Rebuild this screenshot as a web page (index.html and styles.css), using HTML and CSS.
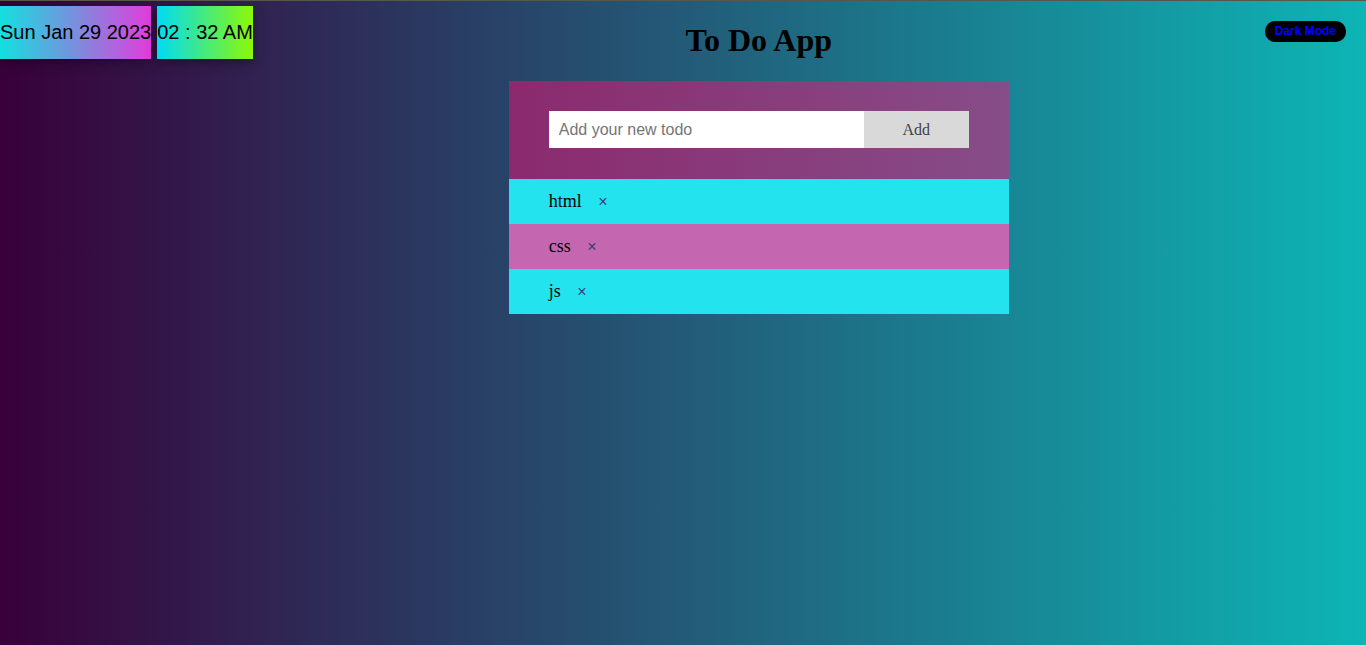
FILE: index.html
```html
<!DOCTYPE html>
<html lang="en">

<head>
    <meta charset="UTF-8">
    <title>To Do App</title>
    <meta name=viewport content="width=device-width,initial-scale=1">
    <link rel="stylesheet" href="styles.css">
</head>

<body>
    <div class=clock>
        <div class=date>Sun Jan 29 2023</div>
        <div class=time>02 : 32 AM</div>
    </div>
    <main class=app>
        <h1>To Do App</h1>
        <div class=card>
            <form class=add-form>
                <input type=text placeholder="Add your new todo">
                <button type=button>Add</button>
            </form>
            <ul class=todos>
                <li class=odd>html <span class=remove>&times;</span></li>
                <li class=even>css <span class=remove>&times;</span></li>
                <li class=odd>js <span class=remove>&times;</span></li>
            </ul>
        </div>
    </main>
    <button class=toggle type=button>Dark Mode</button>
</body>

</html>
```

FILE: styles.css
```css
* {
    margin: 0;
    padding: 0;
    box-sizing: border-box;
}

html,
body {
    height: 100%;
}

body {
    display: flex;
    align-items: flex-start;
    border-top: 1px solid #55584a;
    background: linear-gradient(to right, #38003a, #0db5b5);
    font-family: "Liberation Serif", serif;
}

.clock {
    display: flex;
    gap: 6px;
    margin-top: 5px;
    font-family: "Liberation Sans", sans-serif;
    font-size: 20px;
    line-height: 23px;
}

.date,
.time {
    padding: 15px 0;
    box-shadow: 0 4px 10px rgba(0, 0, 0, 0.35);
    white-space: nowrap;
}

.date {
    background: linear-gradient(to right, #13e0e0, #e23cdc);
}

.time {
    background: linear-gradient(to right, #00dcf5, #8cf806);
}

.app {
    flex: 1;
    display: flex;
    flex-direction: column;
    align-items: center;
}

h1 {
    font-size: 32px;
    margin: 21px 0 22px;
    line-height: 37px;
}

.card {
    width: 500px;
}

.add-form {
    display: flex;
    padding: 30px 40px 31px;
    background: linear-gradient(to right, #8b2a6e, #864d88);
}

.add-form input {
    width: 315px;
    height: 37px;
    border: 0;
    padding: 0 10px;
    font-family: "Liberation Sans", sans-serif;
    font-size: 16px;
    outline: none;
}

.add-form input::placeholder {
    color: #757575;
}

.add-form button {
    width: 105px;
    height: 37px;
    border: 0;
    background-color: #d9d9d9;
    color: #444;
    font-family: "Liberation Serif", serif;
    font-size: 16px;
}

.todos {
    list-style: none;
}

.todos li {
    height: 45px;
    line-height: 45px;
    padding-left: 40px;
    font-size: 18px;
}

.odd {
    background-color: #22e3ee;
}

.even {
    background-color: #c567b0;
}

.remove {
    margin-left: 12px;
    font-family: "Liberation Sans", sans-serif;
    font-size: 16px;
    color: #3a3a7a;
}

.toggle {
    margin: 20px 20px 0 0;
    padding: 2px 10px;
    border: 0;
    border-radius: 10px;
    background-color: black;
    color: blue;
    font-family: "Liberation Sans", sans-serif;
    font-size: 12px;
    font-weight: bold;
    line-height: 17px;
}
```
